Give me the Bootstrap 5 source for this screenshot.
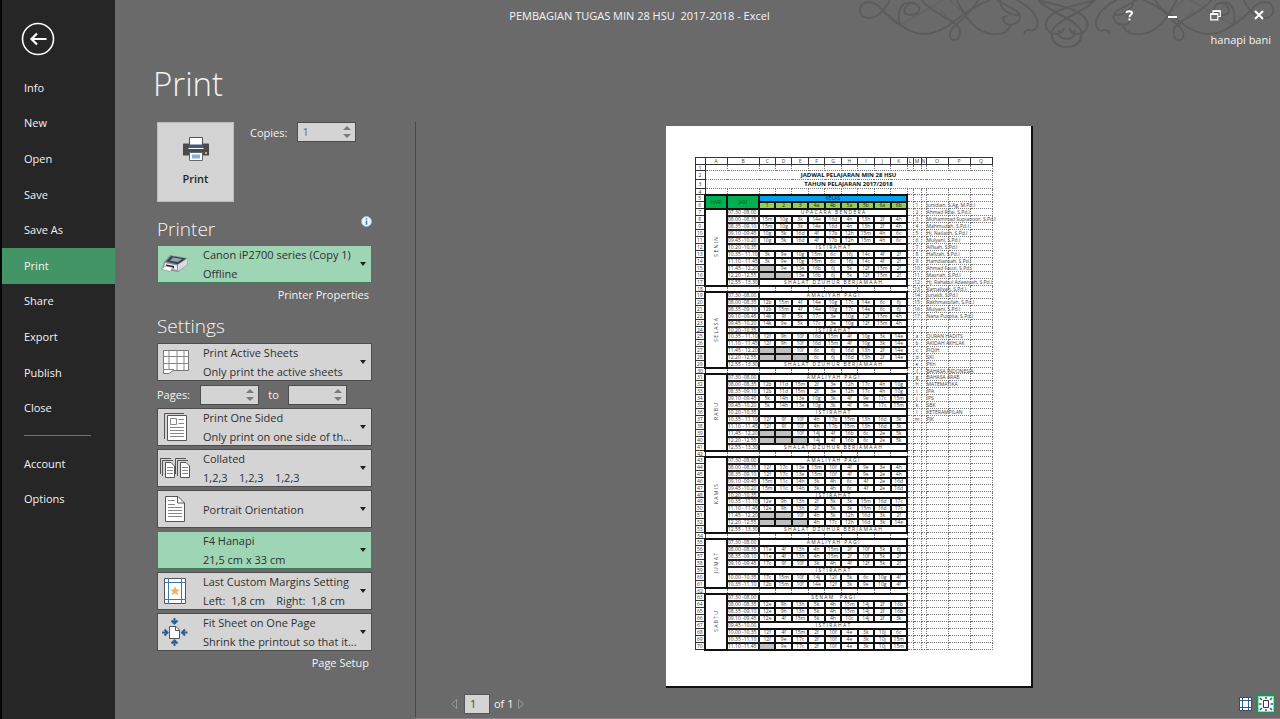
<!DOCTYPE html>
<html lang="en">
<head>
<meta charset="utf-8">
<meta name="viewport" content="width=device-width, initial-scale=1">
<title>PEMBAGIAN TUGAS MIN 28 HSU 2017-2018 - Excel</title>
<link href="https://cdn.jsdelivr.net/npm/bootstrap@5.3.0/dist/css/bootstrap.min.css" rel="stylesheet">
<style>
  body { background: #6a6a6a; color: #f4f4f4; font: 11px/18px "Open Sans", "Noto Sans", sans-serif; }
  /* navigation rail */
  .rail { width: 115px; background: #262626; border-left: 2px solid #050505; padding-top: 22px; }
  .back { width: 34px; height: 34px; margin-left: 19px; }
  .rail-main { height: 356px; margin-top: 14px; }
  .rail-foot { height: 71px; }
  .rail .nav-link { color: #f2f2f2; padding: 0 0 0 22px; }
  .rail .nav-link:hover { background: #3a3a3a; }
  .rail .nav-link.active { background: #439467; }
  .rail-line { width: 67px; margin: 9px 0 10px 22px; border-top: 1px solid #6f6f6f; opacity: 1; }
  /* title area */
  .top { height: 122px; }
  .doc-title { padding: 7px 116px 0 0; white-space: pre; }
  .flourish { width: 422px; height: 50px; }
  .win { padding: 5px 7px 0 0; }
  .win button, .plain { background: none; border: 0; color: #fff; padding: 0; }
  .win button { width: 29px; height: 20px; line-height: 0; }
  .user { padding: 6px 9px 0 0; }
  .page-title { font-size: 33px; line-height: 40px; font-weight: 300; padding: 39px 0 0 38px; }
  /* settings column */
  .settings { width: 301px; padding: 0 43px 0 42px; border-right: 1px solid #474747; margin-bottom: 2px; }
  .btn-print { width: 77px; height: 80px; background: #d4d4d4; border: 1px solid #bcbcbc; color: #262626; font-weight: 600; }
  .group-title { font-size: 19px; line-height: 26px; font-weight: 300; }
  .printer-row { height: 43px; padding-top: 14px; }
  .opt { height: 38px; background: #d4d4d4; border: 1px solid #4d4d4d; color: #303030; padding: 0 5px 0 0; text-align: left; white-space: pre; line-height: 19px; }
  .opt:hover { background: #dedede; }
  .opt.picked { background: #9dd5b5; border-color: #3f7d5b; }
  .opt-icon { width: 45px; padding-left: 3px; flex: none; line-height: 0; }
  .opt.dropdown-toggle::after { border-top: 4px solid #202020; border-left-width: 3px; border-right-width: 3px; margin: 0; }
  .spin { height: 20px; width: 59px; background: #d4d4d4; border: 1px solid #4d4d4d; }
  .spin input { width: 36px; border: 0; background: none; color: #6b6b6b; padding: 0 0 0 4px; font-size: 11px; outline: 0; }
  .spin svg { flex: none; }
  .text-link { color: #f4f4f4; text-decoration: none; }
  /* preview */
  .sheet { width: 365px; background: #fff; box-shadow: 1px 1px 0 1px #101010; padding: 31px 38px 35px 29px; margin-top: 4px; }
  .grid { width: 100%; table-layout: fixed; border-collapse: collapse; color: #3c3c3c; font-size: 5px; line-height: 4px; text-align: center; }
  .grid tr { height: 7px; }
  .grid tr.slim { height: 6px; }
  .grid tr.tall { height: 9px; }
  .grid th, .grid td { padding: 0; font-weight: 400; white-space: pre; border: 1px dotted #777; height: inherit; }
  .grid .edge { border: 1px solid #333; }
  .grid .box { border: 2px solid #111; }
  .grid .ttl { font-size: 6px; line-height: 7px; font-weight: 700; color: #111; }
  .grid .green { background: #00b050; color: #053; }
  .grid .blue { background: #00a2ee; color: #024; }
  .grid .lime { background: #92d050; color: #220; }
  .grid .off { background: #c0c0c0; }
  .grid .name { text-align: left; overflow: visible; }
  .grid .time { text-align: left; border: 2px solid #222; }
  .grid .gap { border-top: 2px solid #111; border-bottom: 2px solid #111; }
  .day span { writing-mode: vertical-rl; transform: rotate(180deg); line-height: 6px; display: inline-block; }
  /* pager */
  .pager { padding: 5px 4px 4px 34px; height: 31px; border-bottom: 1px solid #8c858b; }
  .page-no { width: 26px; height: 20px; background: #d4d4d4; border: 1px solid #555; color: #444; padding: 0 0 0 5px; font-size: 11px; margin: 0 4px 0 6px; }
  .zoomed { width: 20px; height: 20px; background: #9dd5b5; border: 2px solid #2f8a5a; line-height: 0; padding: 0; }
</style>
</head>
<body>
<div class="d-flex min-vh-100">
  <aside class="rail flex-shrink-0">
    <button class="plain back d-block" aria-label="Back">
      <svg width="34" height="34" viewBox="0 0 34 34" fill="none" stroke="#fff"><circle cx="17" cy="17" r="15.5" stroke-width="1.6"/><path d="M25.500 17H11M16 11.500L10.500 17L16 22.500" stroke-width="2.200"/></svg>
    </button>
    <nav class="rail-main nav flex-column flex-nowrap">
      <a class="nav-link flex-fill d-flex align-items-center" href="#">Info</a>
      <a class="nav-link flex-fill d-flex align-items-center" href="#">New</a>
      <a class="nav-link flex-fill d-flex align-items-center" href="#">Open</a>
      <a class="nav-link flex-fill d-flex align-items-center" href="#">Save</a>
      <a class="nav-link flex-fill d-flex align-items-center" href="#">Save As</a>
      <a class="nav-link flex-fill d-flex align-items-center active" href="#">Print</a>
      <a class="nav-link flex-fill d-flex align-items-center" href="#">Share</a>
      <a class="nav-link flex-fill d-flex align-items-center" href="#">Export</a>
      <a class="nav-link flex-fill d-flex align-items-center" href="#">Publish</a>
      <a class="nav-link flex-fill d-flex align-items-center" href="#">Close</a>
    </nav>
    <hr class="rail-line">
    <nav class="rail-foot nav flex-column flex-nowrap">
      <a class="nav-link flex-fill d-flex align-items-center" href="#">Account</a>
      <a class="nav-link flex-fill d-flex align-items-center" href="#">Options</a>
    </nav>
  </aside>

  <div class="flex-grow-1 d-flex flex-column">
    <header class="top position-relative">
      <svg class="flourish position-absolute top-0 end-0" viewBox="8 0 422 50" fill="none" stroke="#5c5c5c">
        <defs>
          <g id="swirl" transform="scale(.33333)">
            <path stroke-width="5.500" d="M120 0C95 45 70 60 45 52C22 44 25 8 55 6C95 8 95 45 150 75C200 110 240 110 290 80C340 45 360 25 420 0M150 75C140 40 150 0 190 9C215 15 215 44 182 45C160 45 155 22 180 12"/>
            <path stroke-width="5.500" d="M215 0C255 50 328 60 330 95C330 125 300 128 299 105C300 75 345 65 385 0M320 0C350 60 380 98 430 103C460 103 475 95 480 78M440 0C480 25 510 30 510 52C506 76 470 82 460 62C458 52 463 48 472 50"/>
            <path stroke-width="4" d="M100 35L170 85M270 30L320 80M340 40L300 0M280 0L150 75" opacity=".5"/>
            <path stroke-width="5.500" d="M500 0C550 25 570 60 560 80C550 108 530 75 522 102M450 0C450 30 480 45 505 45"/>
            <path stroke-width="6.500" d="M735 0C690 15 590 25 587 75C590 108 640 110 640 85M565 0C600 40 690 60 695 100C695 130 672 141 650 141M650 117C632 117 622 105 628 90"/>
          </g>
        </defs>
        <use href="#swirl"/><use href="#swirl" transform="translate(433.300 0) scale(-1 1)"/>
      </svg>
      <div class="doc-title text-center">PEMBAGIAN TUGAS MIN 28 HSU  2017-2018 - Excel</div>
      <div class="position-absolute top-0 end-0">
        <div class="win d-flex justify-content-end" style="gap:14px">
          <button aria-label="Help"><svg width="9" height="11" viewBox="0 0 9 11" fill="none" stroke="#fff" stroke-width="2"><path d="M1.500 3C1.500 .5 7 .5 7 3C7 5 4.500 4.600 4.500 7.200M4.500 8.500V10.600"/></svg></button>
          <button aria-label="Minimize"><svg width="9" height="11"><path d="M0 6h9v2H0z" fill="#fff"/></svg></button>
          <button aria-label="Restore"><svg width="11" height="11" viewBox="0 0 11 11" fill="none" stroke="#fff"><path d="M3 3V.8H10.300V6.500H8M.7 3.800H7.800V9.800H.7Z" stroke-width="1.200"/><path d="M.7 4.200H7.800M3 1.300H10" stroke-width="1.600"/></svg></button>
          <button aria-label="Close"><svg width="10" height="10" viewBox="0 0 10 10" stroke="#fff" stroke-width="2"><path d="M1 1L9 9M9 1L1 9"/></svg></button>
        </div>
        <div class="user text-end">hanapi bani</div>
      </div>
      <h1 class="page-title m-0">Print</h1>
    </header>

    <div class="d-flex flex-grow-1">
      <section class="settings flex-shrink-0">
        <div class="d-flex">
          <button class="btn-print d-flex flex-column align-items-center justify-content-center">
            <svg class="mb-2" width="28" height="26" viewBox="0 0 28 26"><path d="M1 8.500Q1 7.500 2 7.500H26Q27 7.500 27 8.500V19.500H1Z" fill="#4a4a4c"/><path d="M7.500 1.500H20.500V9H7.500Z" fill="#fff" stroke="#555"/><path d="M6.500 9H21.500V12.500H6.500Z" fill="#2f5f93"/><path d="M6.500 12.500h15" stroke="#fff"/><path d="M7.500 16.500H20.500V24.500H7.500Z" fill="#fff" stroke="#666"/><path d="M10 18.500h8v4h-8z" fill="#82b1dc"/><circle cx="24" cy="17" r="1" fill="#f3c9a0"/></svg>
            <span>Print</span>
          </button>
          <label for="copies" class="ms-3" style="padding-top:2px">Copies:</label>
          <div class="spin d-flex align-items-center" style="margin-left:10px"><input id="copies" type="text" value="1"><svg class="ms-auto me-1" width="8" height="14" fill="#7a7a7a"><path d="M0 5L4 1L8 5ZM0 9H8L4 13Z"/></svg></div>
        </div>
        <div class="printer-row d-flex justify-content-between align-items-start">
          <h2 class="group-title m-0">Printer</h2>
          <svg width="11" height="11" viewBox="0 0 11 11"><circle cx="5.500" cy="5.500" r="5" fill="#eef4fb" stroke="#9fb8d4"/><path d="M5.500 2.200V3.600M5.500 4.600V8.800" stroke="#3f75b5" stroke-width="1.500"/></svg>
        </div>
        <button class="opt picked dropdown-toggle d-flex align-items-center w-100">
          <span class="opt-icon"><svg width="27" height="18" viewBox="0 0 27 18"><path d="M3 7L9 0L26 3L26.500 10L17 17L1 14Z" fill="#8c9199"/><path d="M5 6.500L10 1L25 3.500L17 9.500Z" fill="#3c434b"/><path d="M12 2.500L21 4L17 7L9 5.800Z" fill="#8aa5b5"/><path d="M17 9.500L26 4V10L17 16Z" fill="#d9dbdf"/><path d="M4 8L16 10.500V15L3 12.500Z" fill="#eee"/><path d="M5 9.500L13 11V13.500L5 12Z" fill="#222"/><path d="M0 14L5 11L12 12.500L9 16.500Z" fill="#fff" stroke="#777" stroke-width=".5"/></svg></span>
          <span class="flex-grow-1">Canon iP2700 series (Copy 1)<br>Offline</span>
        </button>
        <div class="text-end" style="padding:3px 3px 9px"><a class="text-link" href="#">Printer Properties</a></div>
        <h2 class="group-title" style="margin:0 0 4px">Settings</h2>

        <button class="opt dropdown-toggle d-flex align-items-center w-100">
          <span class="opt-icon"><svg width="30" height="28" viewBox="0 0 30 28"><path d="M2.500 2.500H27.500V22.500H12L8 25.500H2.500Z" fill="#fff" stroke="#777"/><path d="M8 2V21M16 2V22M23 2V22M2 8.500H28M2 15.500H28M2 21.500H13" stroke="#888" fill="none"/></svg></span>
          <span class="flex-grow-1">Print Active Sheets<br>Only print the active sheets</span>
        </button>
        <div class="d-flex align-items-center" style="height:27px">
          <label for="from" style="width:43px">Pages:</label>
          <div class="spin d-flex align-items-center"><input id="from" type="text"><svg class="ms-auto me-1" width="8" height="14" fill="#7a7a7a"><path d="M0 5L4 1L8 5ZM0 9H8L4 13Z"/></svg></div>
          <label for="to" class="text-center" style="width:29px">to</label>
          <div class="spin d-flex align-items-center"><input id="to" type="text"><svg class="ms-auto me-1" width="8" height="14" fill="#7a7a7a"><path d="M0 5L4 1L8 5ZM0 9H8L4 13Z"/></svg></div>
        </div>
        <div class="d-grid" style="gap:3px">
          <button class="opt dropdown-toggle d-flex align-items-center w-100">
            <span class="opt-icon"><svg width="30" height="30" viewBox="0 0 30 30" fill="none"><path d="M3.500 27V1.500H23" stroke="#555"/><path d="M6.500 3.500H25.500V28.500H6.500Z" fill="#fff" stroke="#555"/><path d="M9.500 6.500H15.500V12.500H9.500ZM17.500 7.500H23M17.500 11.500H23M9 15.500H23M9 18.500H23M9 21.500H23M9 24.500H23" stroke="#888"/></svg></span>
            <span class="flex-grow-1">Print One Sided<br>Only print on one side of th...</span>
          </button>
          <button class="opt dropdown-toggle d-flex align-items-center w-100">
            <span class="opt-icon" style="padding-left:1px"><svg width="32" height="22" viewBox="0 0 32 22"><g id="stack" fill="none" stroke="#555"><path d="M1.500 17V1.500H12M3.500 19V3.500H14"/><path d="M6.500 5.500H12L15.500 9V20.500H6.500Z" fill="#fff"/><path d="M8 10.500H14M8 13.500H14M8 16.500H14" stroke="#888"/></g><use href="#stack" x="15"/></svg></span>
            <span class="flex-grow-1">Collated<br>1,2,3    1,2,3    1,2,3</span>
          </button>
          <button class="opt dropdown-toggle d-flex align-items-center w-100">
            <span class="opt-icon"><svg width="28" height="28" viewBox="0 0 28 28" fill="none" stroke="#555"><path d="M4.500 1.500H17L23.500 8V26.500H4.500Z" fill="#fff"/><path d="M16.500 1.500V8H23.500"/><path d="M7 5.500H14M7 9.500H14M7 12.500H21M7 15.500H21M7 18.500H21M7 21.500H21" stroke="#888"/></svg></span>
            <span class="flex-grow-1">Portrait Orientation</span>
          </button>
          <button class="opt picked dropdown-toggle d-flex align-items-center w-100">
            <span class="opt-icon"></span>
            <span class="flex-grow-1">F4 Hanapi<br>21,5 cm x 33 cm</span>
          </button>
          <button class="opt dropdown-toggle d-flex align-items-center w-100">
            <span class="opt-icon"><svg width="28" height="28" viewBox="0 0 28 28"><path d="M3.500 1.500H24.500V26.500H3.500Z" fill="#fff" stroke="#555"/><path d="M7.500 1V27M20.500 1V27M3 5.500H25M3 22.500H25" stroke="#3f78b0"/><path d="M14 9L15.500 12.500H19L16.200 14.800L17.300 18.500L14 16.300L10.700 18.500L11.800 14.800L9 12.500H12.500Z" fill="#e8b566"/></svg></span>
            <span class="flex-grow-1">Last Custom Margins Setting<br>Left:  1,8 cm    Right:  1,8 cm</span>
          </button>
          <button class="opt dropdown-toggle d-flex align-items-center w-100">
            <span class="opt-icon"><svg width="27" height="30" viewBox="0 0 27 30"><path d="M8.500 9.500H15L18.500 13V21.500H8.500Z" fill="#fff" stroke="#555"/><path d="M14.500 9.500V13.500H18.500" fill="none" stroke="#555"/><g fill="none" stroke="#2e5f8e" stroke-width="2"><path d="M13.500 1V6M10.500 3.500L13.500 6.500L16.500 3.500M13.500 29V24M10.500 26.500L13.500 23.500L16.500 26.500M1 15.500H6M3.500 12.500L6.500 15.500L3.500 18.500M26.500 15.500H21.500M24 12.500L21 15.500L24 18.500"/></g></svg></span>
            <span class="flex-grow-1">Fit Sheet on One Page<br>Shrink the printout so that it...</span>
          </button>
        </div>
        <div class="text-end" style="padding:3px 3px 0"><a class="text-link" href="#">Page Setup</a></div>
      </section>

      <section class="flex-grow-1 d-flex flex-column">
        <div class="sheet mx-auto">
          <table class="grid" id="schedule" aria-label="Jadwal pelajaran">
            <colgroup><col style="width:10px"><col style="width:22px"><col style="width:32px"><col span="9"><col style="width:6px"><col style="width:8px"><col style="width:5px"><col span="2" style="width:22px"><col style="width:22px"></colgroup>
            <tbody></tbody>
          </table>
        </div>
        <footer class="pager d-flex align-items-center mt-auto">
          <button class="plain d-flex" aria-label="Previous page"><svg width="8" height="12" fill="none" stroke="#989898"><path d="M6.500 1.500V10.500L1.500 6Z"/></svg></button>
          <input class="page-no" aria-label="Page" value="1">
          <span>of 1</span>
          <button class="plain d-flex ms-1" aria-label="Next page"><svg width="8" height="12" fill="none" stroke="#989898"><path d="M1.500 1.500V10.500L6.500 6Z"/></svg></button>
          <button class="plain ms-auto me-1 d-flex" aria-label="Show margins"><svg width="13" height="14" viewBox="0 0 13 14"><path d="M.5 .5H12.500V13.500H.5Z" fill="#fff" stroke="#445"/><path d="M3.500 0V14M9.500 0V14M0 3.500H13M0 10.500H13" stroke="#2f5f8e"/></svg></button>
          <button class="zoomed" aria-label="Zoom to page"><svg width="14" height="14" viewBox="0 0 14 14"><path d="M0 0H14V14H0Z" fill="#fff"/><path d="M4.500 3.500H9.500V10.500H4.500Z" fill="#fff" stroke="#334"/><path d="M1 1L3 3M13 1L11 3M1 13L3 11M13 13L11 11M7 0V2M7 12V14M0 7H2.500M11.500 7H14" stroke="#2f5f8e" stroke-width="1.500"/></svg></button>
        </footer>
      </section>
    </div>
  </div>
</div>
<script src="https://cdn.jsdelivr.net/npm/bootstrap@5.3.0/dist/js/bootstrap.bundle.min.js"></script>
<script>
  // One entry per sheet row; "#" marks a cell that is blocked out.
  const T = ['07.30 -08.00','08.00 -08.35','08.35 -09.10','09.10 -09.45','09.45 -10.20','10.20 -10.35','10.35 - 11.10','11.10 - 11.45','11.45 - 12.20','12.20 -12.55','12.55 - 13.30'];
  const REST = 'I S T I R A H A T', PRAY = 'S H A L A T   D Z U H U R   B E R J A M A A H', AM = 'A M A L I Y A H   P A G I';
  const days = [
    ['S E N I N', [
      [T[0],'U P A C A R A   B E N D E R A'],
      [T[1],'15m 10g 3k 14e 16d 4n 13h 2f 4h'],[T[2],'15m 10g 3k 14e 16d 4n 13h 2f 4h'],
      [T[3],'10g 5k 16d 4f 17b 12h 15m 4h 6c'],[T[4],'10g 5k 16d 4f 17b 12h 15m 4h 6c'],[T[5],REST],
      [T[6],'3k 9e 10g 15m 6c 16j 14c 4f 2f'],[T[7],'3k 9e 10g 15m 6c 16j 14c 4f 2f'],
      [T[8],'# 9e 13e 16b 6j 5k 12f 15m 2f'],[T[9],'# # 13e 16b 6j 5k 12f 15m 2f'],[T[10],PRAY]]],
    ['S E L A S A', [
      [T[0],AM],
      [T[1],'12b 15m 4f 14e 10g 17c 14e 6c 6j'],[T[2],'12b 15m 4f 14e 10g 17c 14e 6c 6j'],
      [T[3],'14k 9f 5k 17c 3e 10g 12f 15m 4h'],[T[4],'14k 9e 5k 17c 3e 10g 12f 15m 4h'],[T[5],REST],
      [T[6],'12f 9h 10f 16d 15m 4f 10g 3k 14e'],[T[7],'12f 9h 10f 16d 15m 4f 10g 3k 14e'],
      [T[8],'# # 10f 6c 6j 16d 13h 2f 14e'],[T[9],'# # # 6c 6j 16d 13h 2f 14e'],[T[10],PRAY]]],
    ['R A B U', [
      [T[0],AM],
      [T[1],'12b 11d 15m 2f 3e 12h 17c 4h 10g'],[T[2],'12b 11d 15m 2f 3e 12h 17c 4h 10g'],
      [T[3],'5k 14h 13e 10g 3k 4f 9e 17c 15m'],[T[4],'5k 14h 13e 10g 3k 4f 9e 17c 15m'],[T[5],REST],
      [T[6],'12f 9f 10f 4h 17b 15m 13h 16d 3k'],[T[7],'12f 9f 10f 4h 17b 15m 13h 16d 3k'],
      [T[8],'# # 10f 14j 4f 16b 6c 2e 5k'],[T[9],'# # # 14j 4f 16b 6c 2e 5k'],[T[10],PRAY]]],
    ['K A M I S', [
      [T[0],AM],
      [T[1],'12f 17c 13e 15m 10f 4f 9e 3e 4h'],[T[2],'12f 17c 13e 15m 10f 4f 9e 2e 4h'],
      [T[3],'15m 11c 14h 3k 4h 6c 4f 2e 16d'],[T[4],'15m 11c 14h 3k 4h 6c 4f 2e 16d'],[T[5],REST],
      [T[6],'12e 9h 13h 2f 5k 3k 15m 16d 17c'],[T[7],'12e 9h 13h 2f 5k 3k 15m 16d 17c'],
      [T[8],'# # 10f 4h 5k 12h 16d 3k 2f'],[T[9],'# # # 4h 17c 12h 16d 3k 14e'],[T[10],PRAY]]],
    ['J U M A T', [
      [T[0],AM],
      [T[1],'11e 4f 13h 4h 15m 2f 10f 5k 6j'],[T[2],'11e 4f 13h 4h 15m 2f 10f 5k 2f'],
      [T[3],'17c 9f 10f 3k 4h 4f 12f 5k 2f'],['',REST],
      ['10.00 -10.35','17c 15m 10f 14j 12f 5k 6c 10g 4f'],['10.35 -11.10','12b 15m 10f 14e 12f 3k 9e 10g 4f']]],
    ['S A B T U', [
      [T[0],'S E N A M     P A G I'],
      [T[1],'12e 9h 13h 5k 4h 15m 14j 2f 16b'],[T[2],'12e 9h 13h 5k 4h 15m 14j 2f 16b'],
      [T[3],'12e 4f 15m 5k 4h 10c 14j 2f 3k'],['09.45 -10.00',REST],
      ['10.00 -10.35','12f 4f 15m 2f 10f 4e 3k 10j 6c'],['10.35 -11.10','12f 9e 17c 2f 10f 4e 3k 10j 15m'],
      ['11.10 -11.45','# 9e 17c 2f 10f 4e 3k 10j 15m']]]
  ];
  const side = {6:'1|Junidian, S.Ag, M.Pd.I',7:'2|Ahmad Rifai, S.Pd.I',8:'3|Muhammad Supianoor, S.Pd.I',9:'4|Mahmudah, S.Pd.I',10:'5|Hj. Nailatih, S.Pd.I',11:'6|Mulyani, S.Pd.I',12:'7|Alfisah, S.Pd.I',13:'8|Hafizah, S.Pd.I',14:'9|Hamdiansah, S.Pd.I',15:'10|Ahmad Fauzi, S.Pd.I',16:'11|Masriah, S.Pd.I',17:'12|Hj. Rahabul Adawiyah, S.Pd.I',18:'13|Kamaliyah, S.Pd.I',19:'14|Junaidi, S.Pd.I',20:'15|Rakhmatullah, S.Pd.I',21:'16|Mulyani, S.Pd.I',22:'17|Nana Puspita, S.Pd.I',25:'a|QURAN HADITS',26:'b|AKIDAH AKHLAK',27:'c|FIQIH',28:'d|SKI',29:'e|PKn',30:'f|BAHASA INDONESIA',31:'g|BAHASA ARAB',32:'h|MATEMATIKA',33:'i|IPA',34:'j|IPS',35:'k|SBK',36:'l|KETERAMPILAN',37:'m|PJK'};
  const body = document.querySelector('#schedule tbody');
  const td = (text = '', cls = '', attrs = '') => `<td class="${cls}" ${attrs}>${text}</td>`;
  const tail = n => {
    const [no, name] = (side[n] || '|').split('|');
    return td() + td(no) + td() + td(name, 'name') + td() + td();
  };
  let n = 0, html = '<tr>' + ['', ...'ABCDEFGHIJKLMNOPQ'].map(c => `<th class="edge">${c}</th>`).join('') + '</tr>';
  const row = (cells, cls = '', withTail = true) => { n++; html += `<tr class="${cls}">${td(n, 'edge')}${cells}${withTail ? tail(n) : ''}</tr>`; };
  const blank = k => td().repeat(k);
  row(blank(11), 'slim');
  row(td('JADWAL PELAJARAN MIN 28 HSU', 'ttl', 'colspan="17"'), 'tall', false);
  row(td('TAHUN PELAJARAN 2017/2018', 'ttl', 'colspan="17"'), 'tall', false);
  row(blank(11), 'slim');
  row(td('HARI', 'box green', 'rowspan="2"') + td('JAM', 'box green', 'rowspan="2"') + td('KELAS', 'box blue', 'colspan="9"'));
  row(['1','2','3','4a','4b','5a','5b','6a','6b'].map(c => td(c, 'box lime')).join(''));
  days.forEach(([day, rows], d) => {
    rows.forEach(([time, what], i) => {
      const first = i ? '' : td(`<span>${day}</span>`, 'box day', `rowspan="${rows.length}"`);
      const parts = what.split(' ');
      const lesson = /\d/.test(what);
      row(first + td(time, 'time') + (lesson
        ? parts.map(p => p === '#' ? td('', 'box off') : td(p, 'box')).join('')
        : td(what, 'box', 'colspan="9"')), n === 23 || n === 47 ? 'slim' : '');
    });
    if (d < days.length - 1) row(td('', 'gap').repeat(11), 'slim');
  });
  body.innerHTML = html;
</script>
</body>
</html>
